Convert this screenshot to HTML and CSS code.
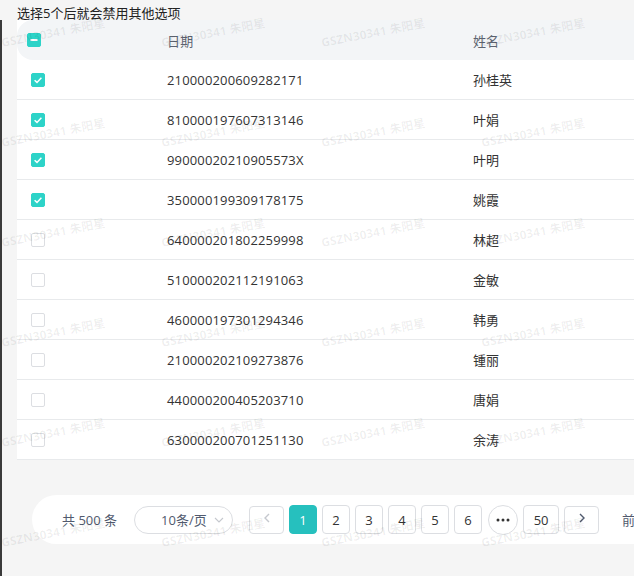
FILE: index.html
```html
<!DOCTYPE html>
<html lang="zh-CN">
<head>
<meta charset="utf-8">
<title>表格</title>
<link rel="stylesheet" href="styles.css">
</head>
<body>
<div class="page">
  <div class="title">选择5个后就会禁用其他选项</div>
  <div class="table">
    <div class="row head">
      <div class="c-check"><span class="cb on"><svg viewBox="0 0 14 14" width="14" height="14"><rect x="3.5" y="6" width="7" height="2" fill="#fff"/></svg></span></div>
      <div class="c-date">日期</div>
      <div class="c-name">姓名</div>
    </div>
    <div class="row"><div class="c-check"><span class="cb on"><svg viewBox="0 0 14 14" width="14" height="14"><path d="M3.6 7.2 L6 9.4 L10.4 4.8" fill="none" stroke="#fff" stroke-width="1.5"/></svg></span></div><div class="c-date">210000200609282171</div><div class="c-name">孙桂英</div></div>
    <div class="row"><div class="c-check"><span class="cb on"><svg viewBox="0 0 14 14" width="14" height="14"><path d="M3.6 7.2 L6 9.4 L10.4 4.8" fill="none" stroke="#fff" stroke-width="1.5"/></svg></span></div><div class="c-date">810000197607313146</div><div class="c-name">叶娟</div></div>
    <div class="row"><div class="c-check"><span class="cb on"><svg viewBox="0 0 14 14" width="14" height="14"><path d="M3.6 7.2 L6 9.4 L10.4 4.8" fill="none" stroke="#fff" stroke-width="1.5"/></svg></span></div><div class="c-date">99000020210905573X</div><div class="c-name">叶明</div></div>
    <div class="row"><div class="c-check"><span class="cb on"><svg viewBox="0 0 14 14" width="14" height="14"><path d="M3.6 7.2 L6 9.4 L10.4 4.8" fill="none" stroke="#fff" stroke-width="1.5"/></svg></span></div><div class="c-date">350000199309178175</div><div class="c-name">姚霞</div></div>
    <div class="row"><div class="c-check"><span class="cb"></span></div><div class="c-date">640000201802259998</div><div class="c-name">林超</div></div>
    <div class="row"><div class="c-check"><span class="cb"></span></div><div class="c-date">510000202112191063</div><div class="c-name">金敏</div></div>
    <div class="row"><div class="c-check"><span class="cb"></span></div><div class="c-date">460000197301294346</div><div class="c-name">韩勇</div></div>
    <div class="row"><div class="c-check"><span class="cb"></span></div><div class="c-date">210000202109273876</div><div class="c-name">锺丽</div></div>
    <div class="row"><div class="c-check"><span class="cb"></span></div><div class="c-date">440000200405203710</div><div class="c-name">唐娟</div></div>
    <div class="row"><div class="c-check"><span class="cb"></span></div><div class="c-date">630000200701251130</div><div class="c-name">余涛</div></div>
  </div>

  <div class="pager">
    <span class="total">共 500 条</span>
    <div class="sizer"><span>10条/页</span><svg class="down" viewBox="0 0 10 6" width="10" height="6"><path d="M1 1 L5 5 L9 1" fill="none" stroke="#c5c8ce" stroke-width="1.1"/></svg></div>
    <div class="pages">
      <span class="pbtn nav"><svg viewBox="0 0 6 10" width="6" height="10"><path d="M5 1 L1 5 L5 9" fill="none" stroke="#c5c8ce" stroke-width="1.4"/></svg></span>
      <span class="pg active">1</span>
      <span class="pg">2</span>
      <span class="pg">3</span>
      <span class="pg">4</span>
      <span class="pg">5</span>
      <span class="pg">6</span>
      <span class="pg more"><svg viewBox="0 0 14 4" width="14" height="4"><circle cx="2" cy="2" r="1.5" fill="#333"/><circle cx="7" cy="2" r="1.5" fill="#333"/><circle cx="12" cy="2" r="1.5" fill="#333"/></svg></span>
      <span class="pg wide">50</span>
      <span class="pbtn nav"><svg viewBox="0 0 6 10" width="6" height="10"><path d="M1 1 L5 5 L1 9" fill="none" stroke="#515a6e" stroke-width="1.4"/></svg></span>
    </div>
    <span class="jump">前往</span>
  </div>
</div>

<div class="edge"></div>

<div class="watermark">
  <div class="wm"><span>GSZN30341 朱阳星</span></div><div class="wm"><span>GSZN30341 朱阳星</span></div><div class="wm"><span>GSZN30341 朱阳星</span></div><div class="wm"><span>GSZN30341 朱阳星</span></div>
  <div class="wm"><span>GSZN30341 朱阳星</span></div><div class="wm"><span>GSZN30341 朱阳星</span></div><div class="wm"><span>GSZN30341 朱阳星</span></div><div class="wm"><span>GSZN30341 朱阳星</span></div>
  <div class="wm"><span>GSZN30341 朱阳星</span></div><div class="wm"><span>GSZN30341 朱阳星</span></div><div class="wm"><span>GSZN30341 朱阳星</span></div><div class="wm"><span>GSZN30341 朱阳星</span></div>
  <div class="wm"><span>GSZN30341 朱阳星</span></div><div class="wm"><span>GSZN30341 朱阳星</span></div><div class="wm"><span>GSZN30341 朱阳星</span></div><div class="wm"><span>GSZN30341 朱阳星</span></div>
  <div class="wm"><span>GSZN30341 朱阳星</span></div><div class="wm"><span>GSZN30341 朱阳星</span></div><div class="wm"><span>GSZN30341 朱阳星</span></div><div class="wm"><span>GSZN30341 朱阳星</span></div>
  <div class="wm"><span>GSZN30341 朱阳星</span></div><div class="wm"><span>GSZN30341 朱阳星</span></div><div class="wm"><span>GSZN30341 朱阳星</span></div><div class="wm"><span>GSZN30341 朱阳星</span></div>
</div>
</body>
</html>
```

FILE: styles.css
```css
* { box-sizing: border-box; margin: 0; padding: 0; }

html, body { overflow: hidden; }

body {
  position: relative;
  width: 634px;
  height: 576px;
  background: #f5f5f5;
  font-family: "Open Sans", "Noto Sans CJK SC", sans-serif;
  font-size: 13px;
  color: #333;
}

.page { padding-left: 17px; }

.title {
  height: 20px;
  line-height: 27px;
  color: #222;
  white-space: nowrap;
}

.table {
  width: 720px;
  background: #fff;
}

.row {
  display: flex;
  align-items: center;
  height: 40px;
  border-bottom: 1px solid #e8eaec;
  white-space: nowrap;
}

.row.head {
  background: #f3f5f7;
  border-bottom: none;
  border-radius: 16px 0 0 16px;
  color: #5c6370;
}

.c-check {
  width: 150px;
  padding-left: 14px;
  display: flex;
  align-items: center;
}

.head .c-check { padding-left: 10px; }

.c-date { width: 306px; letter-spacing: 0.15px; }
.c-name { flex: 1; }

.cb {
  display: block;
  width: 14px;
  height: 14px;
  border: 1px solid #dcdee2;
  border-radius: 2px;
  background: #fff;
  position: relative;
}

.cb.on {
  background: #2dd3c8;
  border-color: #2dd3c8;
}

.cb svg {
  position: absolute;
  left: -1px;
  top: -1px;
}

.pager {
  margin-top: 35px;
  margin-left: 15px;
  width: 720px;
  height: 49px;
  background: #fff;
  border-radius: 25px 0 0 25px;
  display: flex;
  align-items: center;
  padding-left: 30px;
  white-space: nowrap;
  color: #515a6e;
}

.total { margin-right: 17px; }

.sizer {
  width: 99px;
  height: 28px;
  border: 1px solid #dcdee2;
  border-radius: 14px;
  display: flex;
  align-items: center;
  padding: 0 8px 0 26px;
  color: #515a6e;
}

.sizer .down { margin-left: auto; }

.pages {
  display: flex;
  align-items: center;
  gap: 5px;
  margin-left: 16px;
}

.pbtn, .pg {
  display: flex;
  align-items: center;
  justify-content: center;
  border: 1px solid #dcdee2;
  border-radius: 4px;
  background: #fff;
  color: #333;
}

.pbtn { width: 35px; height: 28px; }
.pbtn svg { margin-top: -3px; }

.pg { width: 28px; height: 29px; }
.pg.wide { width: 36px; }

.pg.active {
  background: #26c0be;
  border-color: #26c0be;
  color: #fff;
}

.pg.more {
  width: 30px;
  height: 30px;
  border-radius: 50%;
  margin-left: 1px;
}

.jump { margin-left: 23px; }

.edge {
  position: absolute;
  left: 0;
  top: 20px;
  bottom: 0;
  width: 2px;
  background: #3a3a3a;
}

.watermark {
  position: absolute;
  left: 0;
  top: 0;
  width: 640px;
  height: 600px;
  display: grid;
  grid-template-columns: repeat(4, 160px);
  grid-auto-rows: 100px;
  pointer-events: none;
  overflow: hidden;
}

.wm { padding-top: 33px; padding-left: 3px; }

.wm span {
  display: inline-block;
  font-size: 12px;
  line-height: 16px;
  font-weight: 700;
  white-space: nowrap;
  color: rgba(0, 0, 0, 0.065);
  transform: rotate(-11deg);
  transform-origin: 0 100%;
}
```
